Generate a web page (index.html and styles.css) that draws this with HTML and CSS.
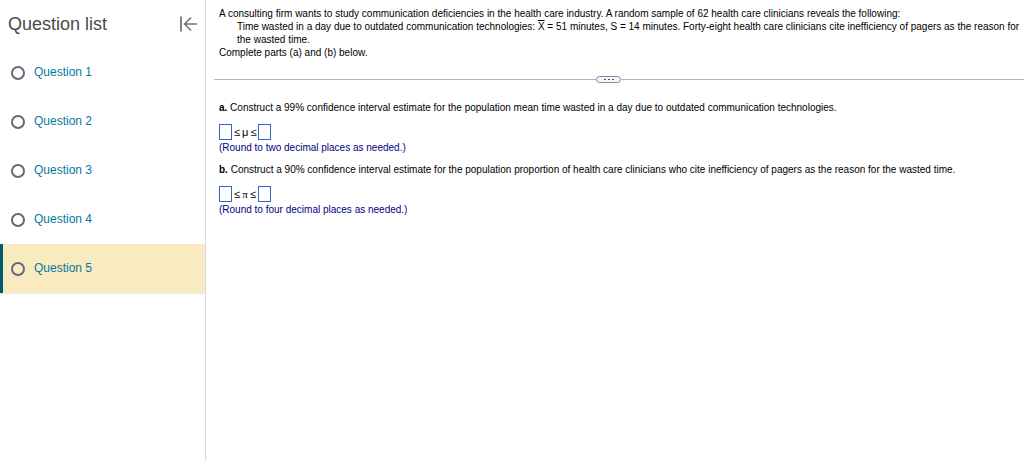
FILE: index.html
```html
<!DOCTYPE html>
<html lang="en">
<head>
    <meta charset="UTF-8">
    <meta name="viewport" content="width=device-width, initial-scale=1.0">
    <title>Question 5</title>
    <link rel="stylesheet" href="styles.css">
</head>
<body>
    <div class="page">
        <aside class="sidebar">
            <div class="sidebar-header">
                <h1>Question list</h1>
                <button type="button" class="collapse-btn" aria-label="Collapse question list">
                    <svg width="17" height="16" viewBox="0 0 17 16" fill="none" stroke="#6f7777">
                        <path d="M1 0.5V15.5" stroke-width="1.8"/>
                        <path d="M17 8H4.5M11 1.5L4.5 8L11 14.5" stroke-width="1.6"/>
                    </svg>
                </button>
            </div>
            <nav>
                <ul class="question-list">
                    <li class="question"><span class="status"></span><a href="#q1">Question 1</a></li>
                    <li class="question"><span class="status"></span><a href="#q2">Question 2</a></li>
                    <li class="question"><span class="status"></span><a href="#q3">Question 3</a></li>
                    <li class="question"><span class="status"></span><a href="#q4">Question 4</a></li>
                    <li class="question active"><span class="status"></span><a href="#q5">Question 5</a></li>
                </ul>
            </nav>
        </aside>

        <main class="content">
            <section class="problem">
                <p>A consulting firm wants to study communication deficiencies in the health care industry. A random sample of 62 health care clinicians reveals the following:</p>
                <p class="indent">Time wasted in a day due to outdated communication technologies: <span class="mean">X</span> = 51 minutes, S = 14 minutes. Forty-eight health care clinicians cite inefficiency of pagers as the reason for the wasted time.</p>
                <p>Complete parts (a) and (b) below.</p>
            </section>

            <div class="divider">
                <button type="button" class="divider-btn" aria-label="Resize">
                    <span></span><span></span><span></span>
                </button>
            </div>

            <section class="parts">
                <div class="part">
                    <p><b>a.</b> Construct a 99% confidence interval estimate for the population mean time wasted in a day due to outdated communication technologies.</p>
                    <div class="answer">
                        <input type="text" aria-label="Mean lower limit">
                        <span>≤</span><span>μ</span><span>≤</span>
                        <input type="text" aria-label="Mean upper limit">
                    </div>
                    <p class="hint">(Round to two decimal places as needed.)</p>
                </div>
                <div class="part">
                    <p><b>b.</b> Construct a 90% confidence interval estimate for the population proportion of health care clinicians who cite inefficiency of pagers as the reason for the wasted time.</p>
                    <div class="answer">
                        <input type="text" aria-label="Proportion lower limit">
                        <span>≤</span><span class="pi">π</span><span>≤</span>
                        <input type="text" aria-label="Proportion upper limit">
                    </div>
                    <p class="hint">(Round to four decimal places as needed.)</p>
                </div>
            </section>
        </main>
    </div>
</body>
</html>
```
FILE: styles.css
```css
:root {
    --link-color: #047a9c;
    --active-color: #f9ebbf;
    --accent-color: #005a70;
    --border-color: #d9d9e3;
    --hint-color: #000080;
}

* {
    box-sizing: border-box;
}

body {
    margin: 0;
    font-family: "Liberation Sans", Arial, sans-serif;
    font-size: 10px;
    line-height: 13px;
    color: #000;
    background: #fff;
}

p, h1, ul {
    margin: 0;
    padding: 0;
}

button {
    padding: 0;
    cursor: pointer;
}

.page {
    display: flex;
    min-height: 100vh;
}

.sidebar {
    flex: 0 0 206px;
    border-right: 1px solid var(--border-color);
}

.sidebar-header {
    display: flex;
    align-items: center;
    justify-content: space-between;
    height: 48px;
    padding: 0 8px;
}

.sidebar-header h1 {
    font-size: 18px;
    line-height: 24px;
    font-weight: normal;
    color: #4a4a4a;
}

.collapse-btn {
    display: flex;
    border: none;
    background: none;
}

.question-list {
    list-style: none;
}

.question {
    display: flex;
    align-items: center;
    gap: 9px;
    height: 49px;
    padding-left: 8px;
    border-left: 3px solid transparent;
    font-size: 12px;
}

.question.active {
    background: var(--active-color);
    border-left-color: var(--accent-color);
    box-shadow: 0 1px 0 #e9e9ed;
}

.question a {
    color: var(--link-color);
    text-decoration: none;
}

.status {
    width: 14px;
    height: 14px;
    border: 2px solid #5f6b76;
    border-radius: 50%;
}

.content {
    flex: 1;
    padding: 7px 0 0 8px;
}

.problem {
    padding: 0 4px 0 5px;
}

.indent {
    padding-left: 18px;
}

.mean {
    text-decoration: overline;
}

.divider {
    display: flex;
    align-items: center;
    margin: 17px 0 18px;
}

.divider::before,
.divider::after {
    content: "";
    flex: 19;
    height: 1px;
    background: #b1b1c1;
}

.divider::after {
    flex: 20;
}

.divider-btn {
    display: flex;
    align-items: center;
    justify-content: center;
    gap: 2px;
    width: 25px;
    height: 7px;
    border: 1px solid #7a8ea3;
    border-radius: 4px;
    background: #f4f8fa;
}

.divider-btn span {
    width: 2px;
    height: 1px;
    background: #4b5563;
}

.parts {
    display: flex;
    flex-direction: column;
    gap: 9px;
    padding-left: 5px;
}

.answer {
    display: flex;
    align-items: center;
    gap: 2px;
    margin-top: 10px;
    font-size: 11px;
}

.answer input {
    width: 13px;
    height: 16px;
    padding: 0;
    border: 1px solid #3366cc;
    background: #fff;
    font: inherit;
}

.answer span {
    min-width: 6px;
    text-align: center;
}

.answer .pi {
    font-family: "Liberation Serif", "Times New Roman", serif;
}

.hint {
    margin-top: 1px;
    color: var(--hint-color);
}
```
